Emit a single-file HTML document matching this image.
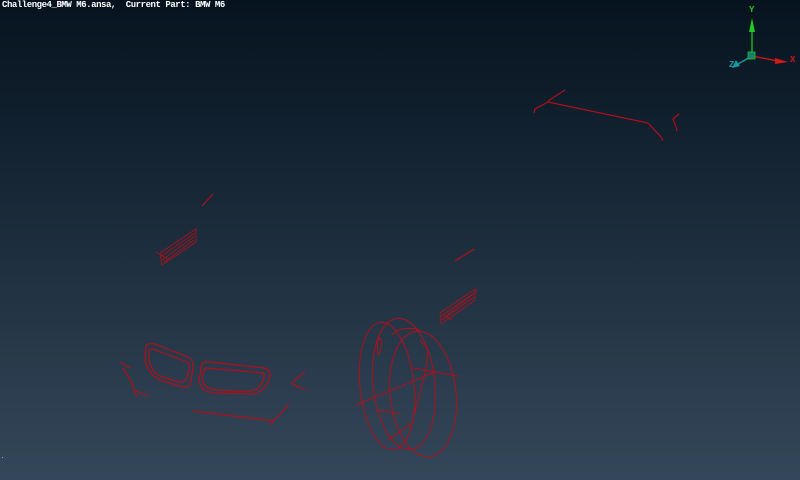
<!DOCTYPE html>
<html><head><meta charset="utf-8"><style>
html,body{margin:0;padding:0;}
body{width:800px;height:480px;overflow:hidden;background:linear-gradient(to bottom,#06131f 0%,#1a2a39 45%,#34475a 100%);position:relative;font-family:"Liberation Mono","DejaVu Sans Mono",monospace;}
.t{position:absolute;left:2px;top:0px;color:#fff;font-size:9px;font-weight:bold;letter-spacing:-0.45px;white-space:pre;line-height:11px;}
svg{position:absolute;left:0;top:0;}
</style></head><body>
<div class="t">Challenge4_BMW M6.ansa,  Current Part: BMW M6</div>
<svg width="800" height="480" viewBox="0 0 800 480" fill="none" stroke="#b0101a" stroke-width="1.2">
<g stroke-width="1.3">
<line x1="752" y1="56" x2="752" y2="26" stroke="#1ec81e"/>
<polygon points="749,32 755,32 752,18" fill="#1ec81e" stroke="none"/>
<text x="749" y="12" fill="#1ec81e" stroke="none" font-size="9" font-weight="bold" font-family="Liberation Mono">Y</text>
<line x1="752" y1="56" x2="778" y2="61" stroke="#d01818"/>
<polygon points="775,58 775,64 788,62" fill="#d01818" stroke="none"/>
<text x="790" y="62" fill="#d01818" stroke="none" font-size="9" font-weight="bold" font-family="Liberation Mono">X</text>
<line x1="752" y1="56" x2="738" y2="64" stroke="#1a9aa0"/>
<polygon points="736,60 740,66 732,68" fill="#1a9aa0" stroke="none"/>
<text x="729" y="67" fill="#1a9aa0" stroke="none" font-size="9" font-weight="bold" font-family="Liberation Mono">Z</text>
<rect x="748" y="52" width="7" height="7" fill="#1a7a78" stroke="#1ec81e" stroke-width="0.8"/>
</g>
<polyline points="534,113 535,109 548,102 648,123 662,138 662,141"/>
<line x1="548" y1="101" x2="565" y2="90"/>
<polyline points="679,114 673,119 676,127 677,131"/>
<line x1="202" y1="206" x2="213" y2="194"/>
<line x1="455" y1="261" x2="474" y2="249"/>
<g stroke-width="0.8">
<polygon points="160,253 196,229 196,242 162,265"/>
<line x1="160" y1="257" x2="195" y2="233"/>
<line x1="162" y1="260" x2="195" y2="236"/>
<line x1="164" y1="262" x2="194" y2="240"/>
<line x1="156" y1="252" x2="168" y2="259"/>
</g>
<g stroke-width="0.8">
<polygon points="440,313 475,289 475,300 441,324"/>
<line x1="440" y1="317" x2="474" y2="293"/>
<line x1="442" y1="320" x2="474" y2="297"/>
<line x1="478" y1="290" x2="446" y2="316"/>
<line x1="443" y1="315" x2="452" y2="320"/>
</g>
<path d="M146,346 Q150,341 160,346 L188,357 Q194,360 193,368 L191,381 Q190,389 182,387 L160,380 Q148,374 145,360 Z"/>
<path d="M149,350 Q152,348 158,351 L187,362 Q190,364 189,370 L187,378 Q184,383 178,382 L160,376 Q151,371 149,360 Z"/>
<path d="M202,364 Q204,361 210,362 L264,368 Q271,370 270,376 Q266,392 252,394 L215,393 Q200,392 199,380 Z"/>
<path d="M205,368 L264,373 Q265,380 258,388 Q252,392 240,391 L216,390 Q203,388 202,378 Z"/>
<line x1="120" y1="362" x2="130" y2="368"/>
<polyline points="123,368 131,381 137,397"/>
<line x1="136" y1="391" x2="148" y2="396"/>
<line x1="193" y1="411" x2="274" y2="421"/>
<polyline points="270,425 289,404"/>
<path d="M305,372 Q294,380 292,384 L306,390"/>
<g stroke-width="1">
<ellipse cx="387" cy="386" rx="27" ry="64" transform="rotate(-6 387 386)"/>
<ellipse cx="404" cy="384" rx="31" ry="66" transform="rotate(-6 404 384)"/>
<ellipse cx="423" cy="394" rx="33" ry="63" transform="rotate(-6 423 394)"/>
<line x1="356" y1="405" x2="435" y2="372"/>
<line x1="413" y1="368" x2="458" y2="376"/>
<line x1="378" y1="410" x2="400" y2="414"/>
<line x1="388" y1="440" x2="410" y2="424"/>
<path d="M378,340 Q384,334 380,352 Q376,360 378,340Z"/>
<path d="M420,340 L428,350 L426,370 L418,400 L410,430"/>
<path d="M392,335 Q400,325 420,330"/>
</g>
<rect x="2" y="457" width="1" height="1" fill="#9aa" stroke="none"/>
</svg>
</body></html>
